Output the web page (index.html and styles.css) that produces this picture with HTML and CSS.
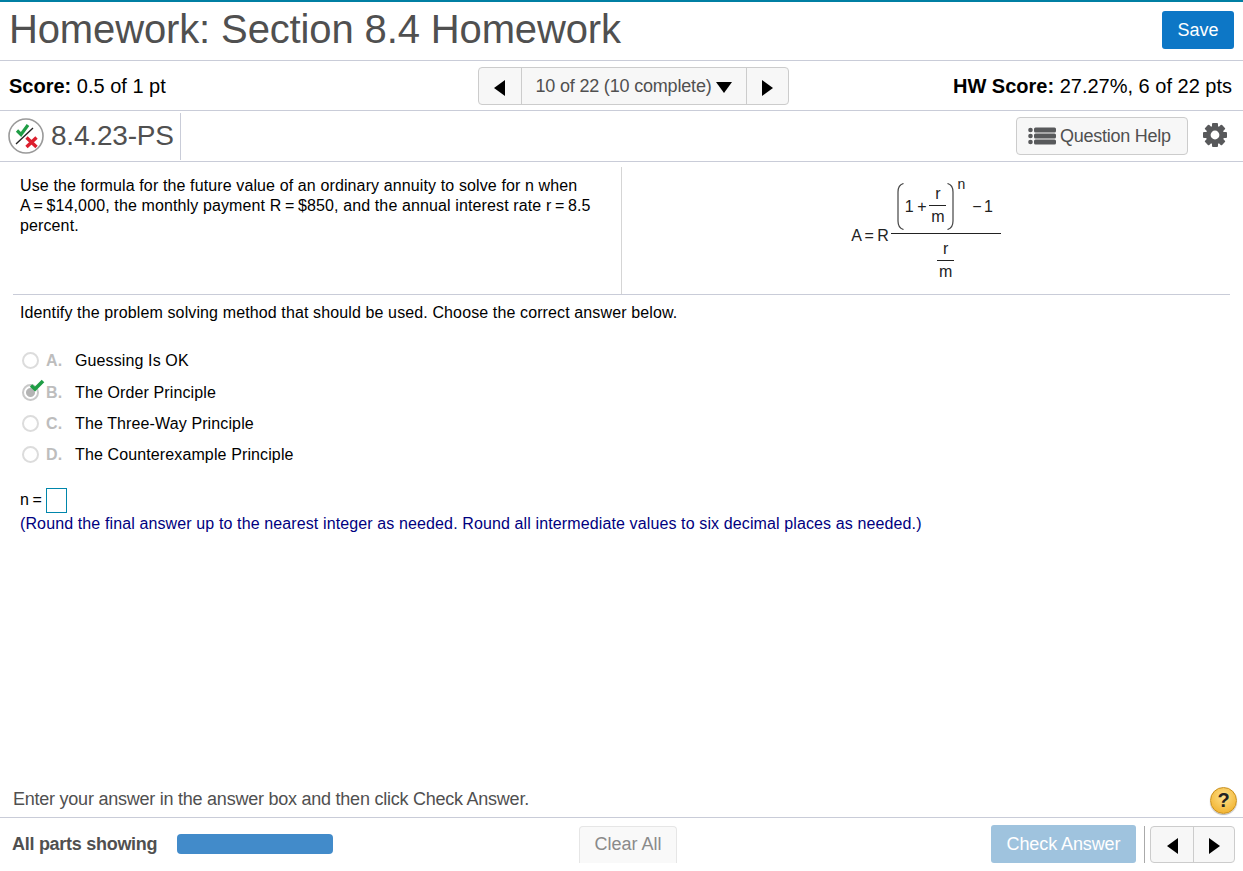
FILE: index.html
```html
<!DOCTYPE html>
<html lang="en">
<head>
    <meta charset="UTF-8">
    <meta name="viewport" content="width=device-width, initial-scale=1.0">
    <title>Homework: Section 8.4 Homework</title>
    <link rel="stylesheet" href="styles.css">
</head>
<body>
    <div class="page">
        <!-- Title -->
        <header class="title-bar">
            <h1>Homework: Section 8.4 Homework</h1>
            <button class="save-btn">Save</button>
        </header>

        <!-- Score row -->
        <div class="score-bar">
            <div class="score-left"><b>Score:</b> 0.5 of 1 pt</div>
            <div class="pager">
                <button class="pager-arrow"><span class="tri-left"></span></button>
                <button class="pager-label">10 of 22 (10 complete)<span class="tri-down"></span></button>
                <button class="pager-arrow"><span class="tri-right"></span></button>
            </div>
            <div class="score-right"><b>HW Score:</b> 27.27%, 6 of 22 pts</div>
        </div>

        <!-- Question id row -->
        <div class="question-bar">
            <div class="question-id">
                <svg class="status-icon" width="36" height="36" viewBox="0 0 36 36">
                    <circle cx="18" cy="18" r="17" fill="#fff" stroke="#9a9a9a" stroke-width="1.6"/>
                    <path d="M9 12.5 L13 16.5 L20 7" fill="none" stroke="#1f9d45" stroke-width="3.2"/>
                    <path d="M8 26 L25 10" stroke="#222" stroke-width="1.3"/>
                    <path d="M18.5 19.5 L28.5 29 M28.5 19.5 L18.5 29" stroke="#dc1f2e" stroke-width="3.4"/>
                </svg>
                <span>8.4.23-PS</span>
            </div>
            <div class="question-tools">
                <button class="help-btn">
                    <svg width="28" height="18" viewBox="0 0 28 18" fill="#58595b">
                        <circle cx="2.5" cy="3" r="2.3"/><circle cx="2.5" cy="9" r="2.3"/><circle cx="2.5" cy="15" r="2.3"/>
                        <rect x="6" y="0.5" width="22" height="5" rx="1.5"/><rect x="6" y="6.5" width="22" height="5" rx="1.5"/><rect x="6" y="12.5" width="22" height="5" rx="1.5"/>
                    </svg>
                    Question Help
                </button>
                <svg class="gear" width="26" height="26" viewBox="0 0 26 26">
                    <g fill="#58595b">
                        <rect x="10" y="1" width="6" height="24" rx="1"/>
                        <rect x="10" y="1" width="6" height="24" rx="1" transform="rotate(45 13 13)"/>
                        <rect x="10" y="1" width="6" height="24" rx="1" transform="rotate(90 13 13)"/>
                        <rect x="10" y="1" width="6" height="24" rx="1" transform="rotate(135 13 13)"/>
                        <circle cx="13" cy="13" r="9.2"/>
                    </g>
                    <circle cx="13" cy="13" r="4.4" fill="#fff"/>
                </svg>
            </div>
        </div>

        <main class="content">
            <section class="problem">
                <div class="problem-text">Use the formula for the future value of an ordinary annuity to solve for n when <span class="eq">A = $14,000,</span> the monthly payment <span class="eq">R = $850,</span> and the annual interest rate <span class="eq">r = 8.5</span> percent.</div>
                <div class="problem-formula">
                    <div class="formula">
                        <span class="lhs">A = R</span>
                        <div class="frac big">
                            <div class="numer">
                                <svg class="paren" width="7" height="47" viewBox="0 0 7 47"><path d="M6.5 0.5 Q1 2 1 9 V38 Q1 45 6.5 46.5" fill="none" stroke="#444" stroke-width="1.2"/></svg>
                                <span class="one">1 +</span>
                                <div class="frac small"><span>r</span><span class="bar-top">m</span></div>
                                <svg class="paren" width="7" height="47" viewBox="0 0 7 47"><path d="M0.5 0.5 Q6 2 6 9 V38 Q6 45 0.5 46.5" fill="none" stroke="#444" stroke-width="1.2"/></svg>
                                <sup class="exp">n</sup>
                                <span class="minus">− 1</span>
                            </div>
                            <div class="denom">
                                <div class="frac small"><span>r</span><span class="bar-top">m</span></div>
                            </div>
                        </div>
                    </div>
                </div>
            </section>

            <p class="prompt">Identify the problem solving method that should be used. Choose the correct answer below.</p>

            <ul class="choices">
                <li><span class="radio"></span><span class="letter">A.</span>Guessing Is OK</li>
                <li>
                    <span class="radio checked"></span>
                    <svg class="tick" width="16" height="13" viewBox="0 0 16 13"><path d="M2 6.5 L6 10 L14 2" fill="none" stroke="#1f9d45" stroke-width="3.6"/></svg>
                    <span class="letter">B.</span>The Order Principle
                </li>
                <li><span class="radio"></span><span class="letter">C.</span>The Three-Way Principle</li>
                <li><span class="radio"></span><span class="letter">D.</span>The Counterexample Principle</li>
            </ul>

            <div class="answer"><span class="eq">n =</span> <input class="answer-box" type="text"></div>
            <p class="hint">(Round the final answer up to the nearest integer as needed. Round all intermediate values to six decimal places as needed.)</p>
        </main>

        <div class="instructions">
            <span>Enter your answer in the answer box and then click Check Answer.</span>
            <span class="help-round">?</span>
        </div>

        <footer class="footer">
            <div class="parts"><b>All parts showing</b><span class="progress"></span></div>
            <button class="clear-btn">Clear All</button>
            <div class="footer-right">
                <button class="check-btn">Check Answer</button>
                <span class="sep"></span>
                <div class="pager small-pager">
                    <button class="pager-arrow"><span class="tri-left"></span></button>
                    <button class="pager-arrow"><span class="tri-right"></span></button>
                </div>
            </div>
        </footer>
    </div>
</body>
</html>
```

FILE: styles.css
```css
* {
    box-sizing: border-box;
}
html, body {
    margin: 0;
    height: 100%;
}
body {
    background-color: #fff;
    color: #000;
    font-family: "Liberation Sans", Arial, sans-serif;
    overflow: hidden;
}
button {
    font-family: inherit;
    cursor: pointer;
}
.page {
    height: 871px;
    display: flex;
    flex-direction: column;
    border-top: 2px solid #007fa3;
}
.title-bar {
    height: 59px;
    flex: none;
    display: flex;
    align-items: center;
    justify-content: space-between;
    padding: 0 9px 0 9px;
    border-bottom: 1px solid #c9ccd8;
}
h1 {
    margin: -4px 0 0 0;
    font-size: 40px;
    font-weight: normal;
    letter-spacing: -0.13px;
    color: #505050;
}
.save-btn {
    width: 72px;
    height: 38px;
    margin-top: -3px;
    padding: 2px 0 0 0;
    background-color: #0d77c6;
    color: #fff;
    border: 0;
    border-radius: 3px;
    font-size: 18px;
}
.score-bar {
    height: 50px;
    flex: none;
    display: flex;
    align-items: center;
    justify-content: space-between;
    padding: 0 11px 0 9px;
    border-bottom: 1px solid #c9ccd8;
    font-size: 20px;
}
.score-left, .score-right {
    width: 300px;
    padding-top: 2px;
}
.score-right {
    text-align: right;
}
.pager {
    display: flex;
    height: 38px;
    background-color: #f7f7f7;
    border: 1px solid #ccc;
    border-radius: 4px;
    margin-left: 25px;
}
.pager button {
    background: none;
    border: 0;
    padding: 0;
    height: 100%;
    color: #505050;
}
.pager-arrow {
    width: 42px;
    display: flex;
    align-items: center;
    justify-content: center;
}
.pager-arrow + .pager-arrow, .pager-label + .pager-arrow {
    border-left: 1px solid #ccc !important;
}
.pager-label {
    width: 225px;
    font-size: 18px;
    letter-spacing: -0.18px;
    border-left: 1px solid #ccc !important;
}
.pager .pager-label {
    padding-top: 1px;
}
.score-bar .pager-arrow span {
    margin-top: 5px;
}
.tri-left, .tri-right, .tri-down {
    display: inline-block;
    width: 0;
    height: 0;
    border-style: solid;
}
.tri-left {
    border-width: 8px 11px 8px 0;
    border-color: transparent #000 transparent transparent;
}
.tri-right {
    border-width: 8px 0 8px 11px;
    border-color: transparent transparent transparent #000;
}
.tri-down {
    border-width: 11px 8px 0 8px;
    border-color: #000 transparent transparent transparent;
    margin-left: 4px;
    vertical-align: -1px;
}
.question-bar {
    height: 51px;
    flex: none;
    display: flex;
    align-items: center;
    justify-content: space-between;
    padding: 0 15px 0 8px;
    border-bottom: 1px solid #c9ccd8;
}
.question-id {
    display: flex;
    align-items: center;
    gap: 7px;
    height: 47px;
    padding-right: 6px;
    border-right: 1px solid #c9ccd8;
    font-size: 28px;
    letter-spacing: -0.2px;
    color: #505050;
}
.question-tools {
    display: flex;
    align-items: center;
    gap: 14px;
}
.gear {
    margin-top: -2px;
}
.help-btn {
    width: 172px;
    height: 38px;
    display: flex;
    align-items: center;
    gap: 4px;
    background-color: #f7f7f7;
    border: 1px solid #ccc;
    border-radius: 4px;
    color: #505050;
    font-size: 18px;
    letter-spacing: -0.25px;
    padding: 0 0 0 11px;
}
.content {
    flex: 1;
    padding: 5px 13px 0 13px;
    font-size: 16px;
    letter-spacing: 0.12px;
}
.eq {
    white-space: nowrap;
    word-spacing: -1px;
}
.problem {
    display: flex;
    height: 128px;
    border-bottom: 1px solid #c9ccd8;
}
.problem-text {
    width: 609px;
    height: 77px;
    margin-right: -1px;
    padding: 9px 30px 0 7px;
    line-height: 20px;
    border-right: 1px solid #b5b5b5;
}
.problem-formula {
    flex: 1;
    display: flex;
    justify-content: center;
    padding-top: 13px;
    border-left: 1px solid #d5d5d5;
}
.formula {
    display: flex;
    align-items: center;
    height: 108px;
    letter-spacing: 0;
    color: #222;
}
.lhs {
    margin-top: 3px;
    word-spacing: -1px;
}
.frac {
    display: flex;
    flex-direction: column;
    align-items: center;
}
.frac.big {
    width: 110px;
    margin-left: 2px;
}
.numer {
    display: flex;
    align-items: center;
    width: 100%;
    height: 54px;
    padding-left: 6px;
    border-bottom: 1px solid #222;
}
.denom {
    height: 54px;
    display: flex;
    align-items: center;
}
.frac.small {
    width: 17px;
    margin-bottom: 4px;
}
.frac.small span {
    display: block;
    width: 100%;
    line-height: 23px;
    text-align: center;
}
.frac.small .bar-top {
    line-height: 21px;
    border-top: 1px solid #222;
}
.one {
    margin: 0 3px 0 1px;
    word-spacing: -1px;
}
.paren + .one + .frac + .paren {
    margin-left: 1px;
}
.exp {
    align-self: flex-start;
    font-size: 14px;
    line-height: 14px;
    margin: -3px 0 0 3px;
}
.minus {
    margin-left: 7px;
    word-spacing: -2px;
}
.prompt {
    margin: 9px 0 0 7px;
    line-height: 18px;
}
.choices {
    list-style: none;
    margin: 23px 0 0 9px;
    padding: 0;
}
.choices li {
    position: relative;
    display: flex;
    align-items: center;
    height: 31px;
}
.choices li:first-child {
    margin-bottom: 1px;
}
.radio {
    width: 17px;
    height: 17px;
    border: 2px solid #dcdcdc;
    border-radius: 50%;
    margin-right: 7px;
    flex: none;
}
.radio.checked {
    border-color: #c8c8c8;
    background: radial-gradient(circle, #b4b4b4 0 4px, #fff 5px);
}
.tick {
    position: absolute;
    left: 7px;
    top: 2px;
}
.letter {
    width: 29px;
    font-weight: bold;
    color: #bdbdbd;
    flex: none;
}
.answer {
    display: flex;
    align-items: center;
    gap: 4px;
    margin: 17px 0 0 7px;
    height: 26px;
}
.answer-box {
    width: 21px;
    height: 25px;
    padding: 0;
    border: 1px solid #0086ab;
    background: #fff;
}
.hint {
    margin: 2px 0 0 7px;
    line-height: 18px;
    color: #000080;
}
.instructions {
    height: 39px;
    flex: none;
    display: flex;
    align-items: center;
    justify-content: space-between;
    padding: 3px 6px 0 13px;
    border-bottom: 1px solid #c9ccd8;
    font-size: 18px;
    letter-spacing: -0.24px;
    color: #505050;
}
.help-round {
    width: 27px;
    height: 27px;
    margin-top: 1px;
    display: flex;
    align-items: center;
    justify-content: center;
    border-radius: 50%;
    background: radial-gradient(circle at 50% 35%, #fde08a, #f0aa1e);
    border: 1px solid #c98f1c;
    box-shadow: 0 1px 1px rgba(0, 0, 0, 0.3);
    color: #222;
    font-weight: bold;
    font-size: 20px;
}
.footer {
    height: 53px;
    flex: none;
    display: flex;
    align-items: flex-start;
    padding: 7px 8px 0 12px;
}
.parts {
    width: 567px;
    height: 38px;
    display: flex;
    align-items: center;
    font-size: 18px;
    letter-spacing: -0.28px;
    color: #505050;
}
.progress {
    width: 156px;
    height: 20px;
    margin-left: 19.5px;
    background-color: #428bca;
    border-radius: 4px;
}
.clear-btn {
    width: 98px;
    height: 37px;
    margin-top: 1px;
    background-color: #f9f9f9;
    color: #8a8a8a;
    border: 1px solid #e6e6e6;
    border-bottom: 0;
    border-radius: 4px 4px 0 0;
    font-size: 18px;
    padding: 0 0 2px 0;
}
.footer-right {
    margin-left: auto;
    display: flex;
    align-items: flex-end;
}
.check-btn {
    width: 145px;
    height: 38px;
    background-color: #9fc3de;
    color: #fff;
    border: 0;
    border-radius: 3px;
    font-size: 18px;
    letter-spacing: -0.1px;
    padding: 0;
}
.sep {
    width: 1px;
    height: 37px;
    margin: 0 5px 0 8px;
    background-color: #aaa;
}
.small-pager {
    height: 37px;
    margin-left: 0;
}
.small-pager .pager-arrow + .pager-arrow {
    width: 41px;
}
.small-pager .pager-arrow span {
    margin-top: 2px;
}
```
